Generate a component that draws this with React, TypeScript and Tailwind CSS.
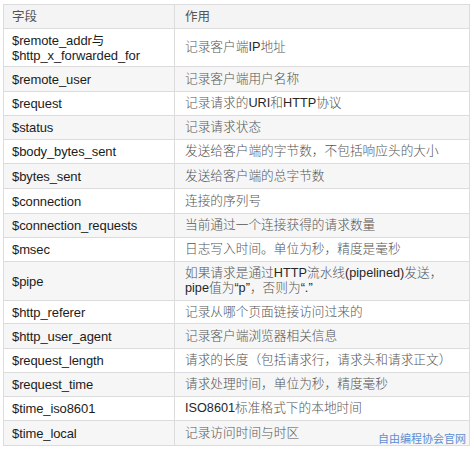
import React from 'react';

type Row = {
  name: React.ReactNode;
  desc: React.ReactNode;
  h: string;
};

// latin words inside the Chinese column are darker than the CJK glyphs
const L = ({ children }: { children: React.ReactNode }) => (
  <span className="text-[#262626] font-normal">{children}</span>
);

const rows: Row[] = [
  {
    name: (
      <>
        $remote_addr<span className="font-['Noto_Sans_CJK_SC',sans-serif] text-[12.5px]">与</span>
        <br />
        $http_x_forwarded_for
      </>
    ),
    desc: (
      <>
        记录客户端<L>IP</L>地址
      </>
    ),
    h: 'h-[38px]',
  },
  { name: '$remote_user', desc: '记录客户端用户名称', h: 'h-[25px]' },
  {
    name: '$request',
    desc: (
      <>
        记录请求的<L>URI</L>和<L>HTTP</L>协议
      </>
    ),
    h: 'h-[24px]',
  },
  { name: '$status', desc: '记录请求状态', h: 'h-[24px]' },
  { name: '$body_bytes_sent', desc: '发送给客户端的字节数，不包括响应头的大小', h: 'h-[24px]' },
  { name: '$bytes_sent', desc: '发送给客户端的总字节数', h: 'h-[25px]' },
  { name: '$connection', desc: '连接的序列号', h: 'h-[25px]' },
  { name: '$connection_requests', desc: '当前通过一个连接获得的请求数量', h: 'h-[24px]' },
  { name: '$msec', desc: '日志写入时间。单位为秒，精度是毫秒', h: 'h-[24px]' },
  {
    name: '$pipe',
    desc: (
      <>
        如果请求是通过<L>HTTP</L>流水线<L>(pipelined)</L>发送，
        <br />
        <L>pipe</L>值为<L>“p”</L>，否则为<L>“.”</L>
      </>
    ),
    h: 'h-[39px]',
  },
  { name: '$http_referer', desc: '记录从哪个页面链接访问过来的', h: 'h-[23px]' },
  { name: '$http_user_agent', desc: '记录客户端浏览器相关信息', h: 'h-[25px]' },
  { name: '$request_length', desc: '请求的长度（包括请求行，请求头和请求正文）', h: 'h-[24px]' },
  { name: '$request_time', desc: '请求处理时间，单位为秒，精度毫秒', h: 'h-[24px]' },
  {
    name: '$time_iso8601',
    desc: (
      <>
        <L>ISO8601</L>标准格式下的本地时间
      </>
    ),
    h: 'h-[24px]',
  },
  { name: '$time_local', desc: '记录访问时间与时区', h: 'h-[25px]' },
];

export default function App() {
  return (
    <div className="relative w-[474px] h-[451px] bg-white pt-1 pl-[3px]">
      <div className="w-[467px] border border-[#dcdcdc] border-b-0">
        <div className="flex h-[24px] bg-[#f4f4f4] border-b border-[#dcdcdc]">
          <div className="w-[171px] border-r border-[#dcdcdc] flex items-center pl-[8px] font-['Noto_Sans_CJK_SC',sans-serif] text-[12.5px] text-[#555]">
            字段
          </div>
          <div className="flex-1 flex items-center pl-[10px] font-['Noto_Sans_CJK_SC',sans-serif] text-[12.5px] text-[#555]">
            作用
          </div>
        </div>
        {rows.map((r, i) => (
          <div
            key={i}
            className={
              'flex border-b border-[#dcdcdc] ' + r.h + (i % 2 === 1 ? ' bg-[#f6f6f6]' : ' bg-white')
            }
          >
            <div className="w-[171px] border-r border-[#dcdcdc] flex items-center pl-[8px] font-['Liberation_Sans',Arial,sans-serif] text-[13px] leading-[15px] text-[#1c1c1c] tracking-[-0.1px]">
              <div>{r.name}</div>
            </div>
            <div className="flex-1 flex items-center pl-[10px] font-['Liberation_Sans','Noto_Sans_CJK_SC',sans-serif] text-[12.7px] leading-[15px] text-[#555] font-light">
              <div>{r.desc}</div>
            </div>
          </div>
        ))}
      </div>
      <div className="absolute left-[378px] top-[431px] font-['Noto_Sans_CJK_SC',sans-serif] text-[11px] leading-[14px] text-[#5b8fd3]">
        自由编程协会官网
      </div>
    </div>
  );
}
